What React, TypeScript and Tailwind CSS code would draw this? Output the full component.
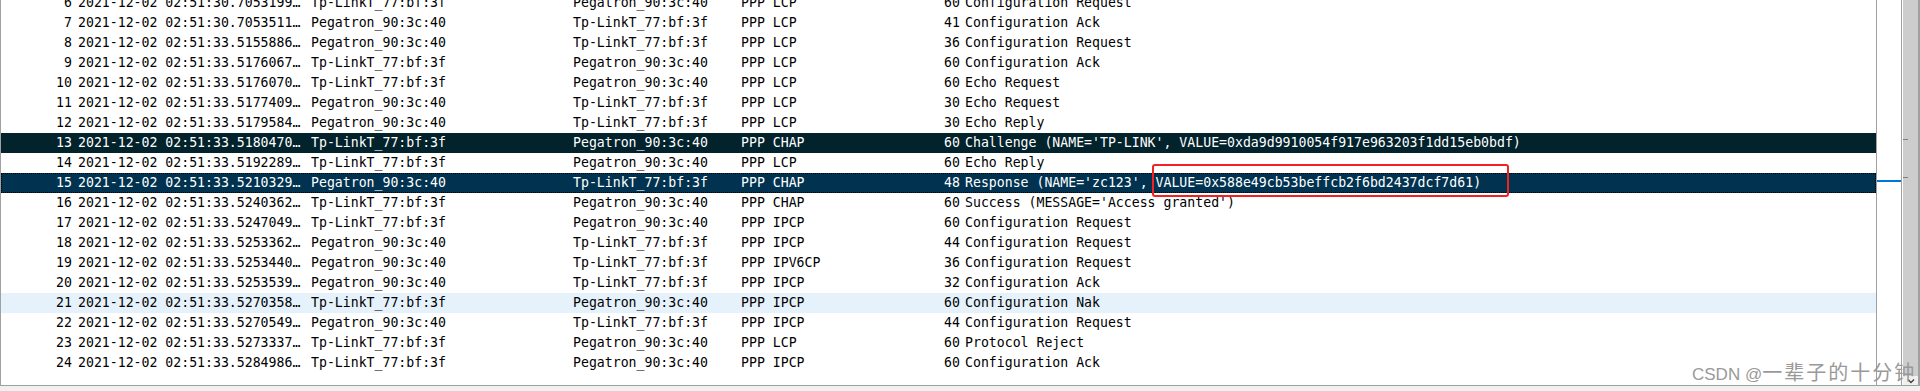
import React from "react";

type Pkt = {
  no: number;
  time: string;
  src: string;
  dst: string;
  proto: string;
  len: number;
  info: string;
  tone?: "dark" | "sel" | "hover";
};

const TP = "Tp-LinkT_77:bf:3f";
const PG = "Pegatron_90:3c:40";

const PACKETS: Pkt[] = [
  { no: 6, time: "02:51:30.7053199…", src: TP, dst: PG, proto: "PPP LCP", len: 60, info: "Configuration Request" },
  { no: 7, time: "02:51:30.7053511…", src: PG, dst: TP, proto: "PPP LCP", len: 41, info: "Configuration Ack" },
  { no: 8, time: "02:51:33.5155886…", src: PG, dst: TP, proto: "PPP LCP", len: 36, info: "Configuration Request" },
  { no: 9, time: "02:51:33.5176067…", src: TP, dst: PG, proto: "PPP LCP", len: 60, info: "Configuration Ack" },
  { no: 10, time: "02:51:33.5176070…", src: TP, dst: PG, proto: "PPP LCP", len: 60, info: "Echo Request" },
  { no: 11, time: "02:51:33.5177409…", src: PG, dst: TP, proto: "PPP LCP", len: 30, info: "Echo Request" },
  { no: 12, time: "02:51:33.5179584…", src: PG, dst: TP, proto: "PPP LCP", len: 30, info: "Echo Reply" },
  { no: 13, time: "02:51:33.5180470…", src: TP, dst: PG, proto: "PPP CHAP", len: 60, info: "Challenge (NAME='TP-LINK', VALUE=0xda9d9910054f917e963203f1dd15eb0bdf)", tone: "dark" },
  { no: 14, time: "02:51:33.5192289…", src: TP, dst: PG, proto: "PPP LCP", len: 60, info: "Echo Reply" },
  { no: 15, time: "02:51:33.5210329…", src: PG, dst: TP, proto: "PPP CHAP", len: 48, info: "Response (NAME='zc123', VALUE=0x588e49cb53beffcb2f6bd2437dcf7d61)", tone: "sel" },
  { no: 16, time: "02:51:33.5240362…", src: TP, dst: PG, proto: "PPP CHAP", len: 60, info: "Success (MESSAGE='Access granted')" },
  { no: 17, time: "02:51:33.5247049…", src: TP, dst: PG, proto: "PPP IPCP", len: 60, info: "Configuration Request" },
  { no: 18, time: "02:51:33.5253362…", src: PG, dst: TP, proto: "PPP IPCP", len: 44, info: "Configuration Request" },
  { no: 19, time: "02:51:33.5253440…", src: PG, dst: TP, proto: "PPP IPV6CP", len: 36, info: "Configuration Request" },
  { no: 20, time: "02:51:33.5253539…", src: PG, dst: TP, proto: "PPP IPCP", len: 32, info: "Configuration Ack" },
  { no: 21, time: "02:51:33.5270358…", src: TP, dst: PG, proto: "PPP IPCP", len: 60, info: "Configuration Nak", tone: "hover" },
  { no: 22, time: "02:51:33.5270549…", src: PG, dst: TP, proto: "PPP IPCP", len: 44, info: "Configuration Request" },
  { no: 23, time: "02:51:33.5273337…", src: TP, dst: PG, proto: "PPP LCP", len: 60, info: "Protocol Reject" },
  { no: 24, time: "02:51:33.5284986…", src: TP, dst: PG, proto: "PPP IPCP", len: 60, info: "Configuration Ack" },
];

function Row({ p }: { p: Pkt }) {
  const tone =
    p.tone === "dark"
      ? "bg-[#02222c] text-white"
      : p.tone === "sel"
        ? "bg-[#013350] text-white outline-1 outline-dotted outline-[#000000] -outline-offset-1"
        : p.tone === "hover"
          ? "bg-[#e5f1fb] text-[#000000]"
          : "text-[#000000]";
  return (
    <div className={`flex h-5 items-center whitespace-pre leading-5 ${tone}`}>
      <span className="w-[71px] text-right">{p.no}</span>
      <span className="ml-[6px] w-[233px]">2021-12-02 {p.time}</span>
      <span className="w-[262px]">{p.src}</span>
      <span className="w-[168px]">{p.dst}</span>
      <span className="w-[159px]">{p.proto}</span>
      <span className="w-[60px] text-right">{p.len}</span>
      <span className="ml-[5px]">{p.info}</span>
    </div>
  );
}

export default function App() {
  return (
    <div className="relative flex h-[391px] w-[1920px] flex-col overflow-hidden bg-white">
      <div className="flex h-[385px]">
        {/* packet list, scrolled so row 6 is half hidden */}
        <div className="h-full w-[1877px] overflow-hidden border-x border-[#a0a0a0]">
          <div
            className="-mt-[7px] text-[13.2px]"
            style={{ fontFamily: '"DejaVu Sans Mono", "Liberation Mono", monospace' }}
          >
            {PACKETS.map((p) => (
              <Row key={p.no} p={p} />
            ))}
          </div>
        </div>

        {/* minimap strip */}
        <div className="relative h-full w-[24px] bg-white">
          <div className="absolute left-0 top-[180px] h-[2px] w-full bg-[#0078d7]" />
        </div>
        <div className="h-full w-px bg-[#a0a0a0]" />
        <div className="h-full w-px bg-white" />

        {/* scrollbar */}
        <div className="relative flex h-full w-[15px] flex-col">
          <div className="h-[376px] bg-[#cdcdcd]" />
          <div className="flex flex-1 items-center justify-center bg-[#f0f0f0]">
            <svg width="8" height="6" viewBox="0 0 8 6">
              <path d="M1 1.5 L4 4.5 L7 1.5" fill="none" stroke="#404040" strokeWidth="1.4" />
            </svg>
          </div>
          <div className="absolute left-0 top-[139px] h-px w-[5px] bg-[#808080]" />
          <div className="absolute left-0 top-[177px] h-px w-[5px] bg-[#808080]" />
        </div>
        <div className="h-full w-[2px] bg-[#a0a0a0]" />
      </div>

      <div className="h-[6px] border-t border-[#a0a0a0] bg-[#f0f0f0]" />

      {/* annotation box */}
      <div className="absolute left-[1152px] top-[164px] h-[33px] w-[357px] rounded-[3px] border-2 border-[#f22222]" />

      {/* watermark */}
      <div
        className="absolute left-[1692px] top-[361px] flex items-baseline whitespace-nowrap leading-[24px] text-[#999999]"
        style={{ fontFamily: '"Liberation Sans", "Noto Sans CJK SC", sans-serif' }}
      >
        <span className="text-[17px]">CSDN @</span>
        <span className="text-[20px] tracking-[2px]">一辈子的十分钟</span>
      </div>
    </div>
  );
}
